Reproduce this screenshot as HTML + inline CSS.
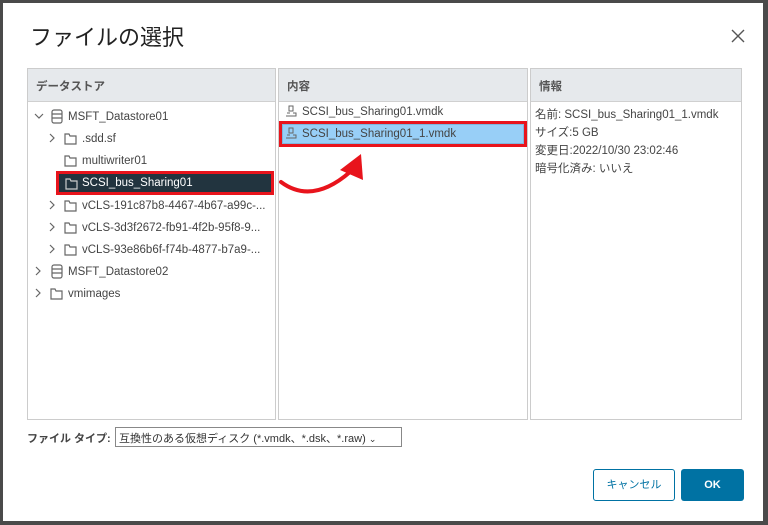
<!DOCTYPE html>
<html><head><meta charset="utf-8"><style>
*{margin:0;padding:0;box-sizing:border-box}
body{width:768px;height:525px;background:#4a4a4a;position:relative;overflow:hidden;font-family:"Liberation Sans","Noto Sans CJK JP",sans-serif;color:#333}
.dlg{position:absolute;left:3px;top:3px;width:760px;height:518px;background:#fff}
.a{position:absolute;white-space:nowrap}
.panel{position:absolute;top:68px;height:352px;border:1px solid #ccc;background:#fff}
.ph{height:33px;background:#e6e9ec;border-bottom:1px solid #d0d0d0;font-size:11.5px;color:#555;padding:9px 0 0 8px;font-weight:bold}
.t{font-size:11.5px;color:#444}
svg{position:absolute}
</style></head><body>
<div class="dlg"></div>
<div class="a" style="left:30px;top:20px;font-size:22px;color:#222">ファイルの選択</div>
<svg style="left:731px;top:29px" width="14" height="14" viewBox="0 0 14 14"><path d="M1 1L13 13M13 1L1 13" stroke="#555" stroke-width="1.4"/></svg>

<div class="panel" style="left:27px;width:249px"><div class="ph">データストア</div></div>
<div class="panel" style="left:278px;width:250px"><div class="ph">内容</div></div>
<div class="panel" style="left:530px;width:212px"><div class="ph">情報</div></div>

<svg style="left:0;top:0" width="280" height="310" viewBox="0 0 280 310" fill="none" stroke="#666" stroke-width="1.2">
<path d="M35 114l4 4 4-4"/>
<path d="M50 134l4 4-4 4"/>
<path d="M50 201l4 4-4 4"/><path d="M50 223l4 4-4 4"/><path d="M50 245l4 4-4 4"/>
<path d="M36 267l4 4-4 4"/><path d="M36 289l4 4-4 4"/>
<rect x="52" y="110" width="10" height="13" rx="2"/><path d="M52 114h10M52 118h10"/>
<rect x="52" y="265" width="10" height="13" rx="2"/><path d="M52 269h10M52 273h10"/>
<path d="M65 134h4l1 2h6v8h-11z"/>
<path d="M65 156h4l1 2h6v8h-11z"/>
<path d="M65 201h4l1 2h6v8h-11z"/><path d="M65 223h4l1 2h6v8h-11z"/><path d="M65 245h4l1 2h6v8h-11z"/>
<path d="M51 289h4l1 2h6v8h-11z"/>
</svg>
<div class="a t" style="left:68px;top:111px">MSFT_Datastore01</div>
<div class="a t" style="left:82px;top:133px">.sdd.sf</div>
<div class="a t" style="left:82px;top:155px">multiwriter01</div>
<div class="a" style="left:56px;top:171px;width:218px;height:24px;border:3px solid #e8141c;background:#22343f"></div>
<svg style="left:65px;top:178px" width="14" height="12" fill="none" stroke="#ccc" stroke-width="1.2"><path d="M1 1h4l1 2h6v8h-11z"/></svg>
<div class="a t" style="left:82px;top:177px;color:#fff">SCSI_bus_Sharing01</div>
<div class="a t" style="left:82px;top:200px">vCLS-191c87b8-4467-4b67-a99c-...</div>
<div class="a t" style="left:82px;top:222px">vCLS-3d3f2672-fb91-4f2b-95f8-9...</div>
<div class="a t" style="left:82px;top:244px">vCLS-93e86b6f-f74b-4877-b7a9-...</div>
<div class="a t" style="left:68px;top:266px">MSFT_Datastore02</div>
<div class="a t" style="left:68px;top:288px">vmimages</div>

<div class="a" style="left:279px;top:121px;width:248px;height:26px;border:3px solid #e8141c;background:#f5f5f5"></div>
<div class="a" style="left:282px;top:124px;width:242px;height:20px;background:#98cff7;border:1px solid #7fb6de"></div>
<svg style="left:284px;top:103px" width="14" height="40" fill="none" stroke="#666" stroke-width="1"><path d="M2 13h10v-3h-3M5 3h4v5h-4zM3 10h3"/><path d="M2 35h10v-3h-3M5 25h4v5h-4zM3 32h3"/></svg>
<div class="a t" style="left:302px;top:106px">SCSI_bus_Sharing01.vmdk</div>
<div class="a t" style="left:302px;top:128px">SCSI_bus_Sharing01_1.vmdk</div>

<svg style="left:0;top:0" width="400" height="220"><path d="M281 182Q312 205 350 172" fill="none" stroke="#e8141c" stroke-width="4" stroke-linecap="round"/><path d="M361 154L340 170L363 180Z" fill="#e8141c"/></svg>

<div class="a t" style="left:535px;top:106px;line-height:18px">名前: SCSI_bus_Sharing01_1.vmdk<br>サイズ:5 GB<br>変更日:2022/10/30 23:02:46<br>暗号化済み: いいえ</div>

<div class="a" style="left:27px;top:430px;font-size:11px;font-weight:bold;color:#444">ファイル タイプ:</div>
<div class="a" style="left:115px;top:427px;height:20px;border:1px solid #888;font-size:11px;padding:2px 3px;color:#333;width:287px">互換性のある仮想ディスク (*.vmdk、*.dsk、*.raw) <span style="font-size:9px">⌄</span></div>

<div class="a" style="left:593px;top:469px;width:82px;height:32px;border:1px solid #0072a3;border-radius:3px;color:#0072a3;font-size:11px;text-align:center;line-height:30px">キャンセル</div>
<div class="a" style="left:681px;top:469px;width:63px;height:32px;background:#0072a3;border-radius:3px;color:#fff;font-size:11px;font-weight:bold;text-align:center;line-height:32px">OK</div>
</body></html>
